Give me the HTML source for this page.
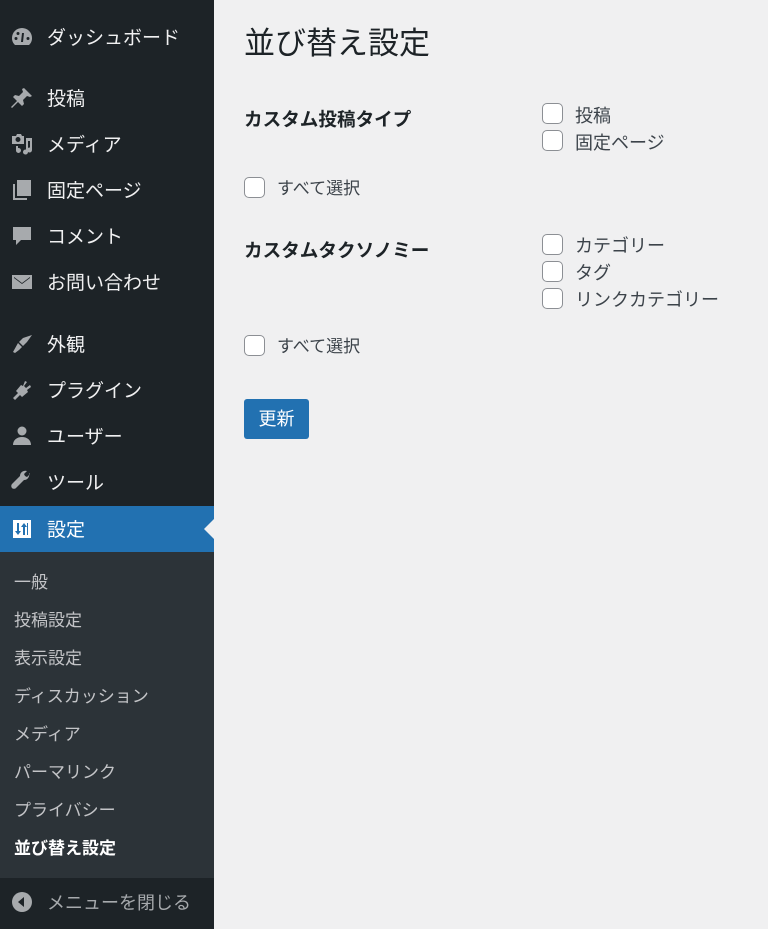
<!DOCTYPE html>
<html><head><meta charset="utf-8"><style>
*{margin:0;padding:0;box-sizing:border-box}
body{width:768px;height:929px;background:#f0f0f1;font-family:"Liberation Sans","Noto Sans CJK JP",sans-serif;position:relative;overflow:hidden}
#sb{position:absolute;left:0;top:0;width:214px;height:929px;background:#1d2327}
.mi{position:absolute;left:0;width:214px;height:46px;color:#f0f0f1;font-size:19px;line-height:46px}
.mi span.t{position:absolute;left:47px;top:2px}
.mi svg{position:absolute;left:10px;top:11px;width:24px;height:24px;fill:#a7aaad}
.act{background:#2271b1;color:#fff}
.act svg{fill:#fff}
#sub{position:absolute;left:0;top:552px;width:214px;height:326px;background:#2c3338}
.si{position:absolute;left:14px;font-size:17px;color:#c3c4c7;line-height:24px;margin-top:2px}
#col{position:absolute;left:0;top:878px;width:214px;height:51px;background:#1d2327;color:#a7aaad;font-size:18px}
.arrow{position:absolute;left:204px;top:519px;width:0;height:0;border-top:10px solid transparent;border-bottom:10px solid transparent;border-right:10px solid #f0f0f1}
.cb{position:absolute;width:21px;height:21px;border:1.5px solid #8c8f94;border-radius:5px;background:#fff}
.lb{position:absolute;font-size:18px;color:#3c434a;line-height:24px;margin-top:2px}
h1{position:absolute;left:244px;top:25px;font-size:31px;font-weight:normal;color:#1d2327;line-height:38px}
.h{position:absolute;left:244px;font-size:18.6px;font-weight:bold;color:#1d2327;line-height:24px;margin-top:2px}
.btn{position:absolute;left:244px;top:399px;width:65px;height:40px;background:#2271b1;border-radius:3px;color:#fff;font-size:18px;line-height:40px;text-align:center}
</style></head><body>
<div id="sb">
<div class="mi" style="top:14px"><svg viewBox="0 0 24 24"><path d="M12 3a10 10 0 0 0-10 10c0 3 1 5 3 7h14c2-2 3-4 3-7A10 10 0 0 0 12 3zm-6 12a1.5 1.5 0 1 1 0-3 1.5 1.5 0 0 1 0 3zm2-5a1.5 1.5 0 1 1 0-3 1.5 1.5 0 0 1 0 3zm5 7h-2l1-9 2 0zm5-2a1.5 1.5 0 1 1 0-3 1.5 1.5 0 0 1 0 3z"/></svg><span class="t">ダッシュボード</span></div>
<div class="mi" style="top:75px"><svg viewBox="0 0 24 24"><path d="M14 2l8 8-2 1-3-1-4 4 1 4-2 2-4-4-6 6-1-1 6-6-4-4 2-2 4 1 4-4-1-3z"/></svg><span class="t">投稿</span></div>
<div class="mi" style="top:121px"><svg viewBox="0 0 24 24"><path d="M2 4h4l1-2h4l1 2h2v8H2zM8 10a2.5 2.5 0 1 0 0-5 2.5 2.5 0 0 0 0 5zM16 6h6v12a2.5 2.5 0 1 1-2-2.4V9h-2v11a2.5 2.5 0 1 1-2-2.4zM4 14h4v2a2.5 2.5 0 1 1-2 2.4V14z"/></svg><span class="t">メディア</span></div>
<div class="mi" style="top:167px"><svg viewBox="0 0 24 24"><path d="M7 2h14v16H7zM3 6h2v14h12v2H3z"/></svg><span class="t">固定ページ</span></div>
<div class="mi" style="top:213px"><svg viewBox="0 0 24 24"><path d="M3 3h18v13H11l-5 5v-5H3z"/></svg><span class="t">コメント</span></div>
<div class="mi" style="top:259px"><svg viewBox="0 0 24 24"><path d="M2 5h20v14H2zM4 7v1l8 6 8-6V7l-8 6z"/></svg><span class="t">お問い合わせ</span></div>
<div class="mi" style="top:321px"><svg viewBox="0 0 24 24"><path d="M22 3l-9 3-4 4 4 4 4-4zM8 11l-5 9 2 1 4-3 3-3z"/></svg><span class="t">外観</span></div>
<div class="mi" style="top:367px"><svg viewBox="0 0 24 24"><path d="M15 3l2 1-3 4 2 2 4-3 1 2-4 3 1 2-6 5-2-2-5 5-2-2 5-5-2-2 5-6 2 1z"/></svg><span class="t">プラグイン</span></div>
<div class="mi" style="top:413px"><svg viewBox="0 0 24 24"><circle cx="12" cy="7" r="4.5"/><path d="M3 21c0-5 4-8 9-8s9 3 9 8z"/></svg><span class="t">ユーザー</span></div>
<div class="mi" style="top:459px"><svg viewBox="0 0 24 24"><path d="M20 4l-3 3-2-1-1-2 3-3c-3-1-7 1-7 5l-8 8c-1 1-1 3 0 4s3 1 4 0l8-8c4 0 6-4 5-7z"/></svg><span class="t">ツール</span></div>
<div class="mi act" style="top:506px"><svg viewBox="0 0 24 24"><path d="M3 3h18v18H3zM7 6v8H5l3 4 3-4H9V6zm8 12v-8h2l-3-4-3 4h2v8zm3-12h-1v12h1z" fill-rule="evenodd"/></svg><span class="t">設定</span></div>
<div class="arrow"></div>
<div id="sub">
<div class="si" style="top:17px">一般</div>
<div class="si" style="top:55px">投稿設定</div>
<div class="si" style="top:93px">表示設定</div>
<div class="si" style="top:131px">ディスカッション</div>
<div class="si" style="top:169px">メディア</div>
<div class="si" style="top:207px">パーマリンク</div>
<div class="si" style="top:245px">プライバシー</div>
<div class="si" style="top:283px;color:#fff;font-weight:bold">並び替え設定</div>
</div>
<div id="col"><svg viewBox="0 0 24 24" style="position:absolute;left:10px;top:12px;width:24px;height:24px"><circle cx="12" cy="12" r="10" fill="#a7aaad"/><path d="M14 7v10l-6-5z" fill="#1d2327"/></svg><span style="position:absolute;left:47px;top:13px;line-height:24px">メニューを閉じる</span></div>
</div>
<h1>並び替え設定</h1>
<div class="h" style="top:106px">カスタム投稿タイプ</div>
<div class="cb" style="left:542px;top:103px"></div><div class="lb" style="left:575px;top:102px">投稿</div>
<div class="cb" style="left:542px;top:130px"></div><div class="lb" style="left:575px;top:129px">固定ページ</div>
<div class="cb" style="left:244px;top:177px"></div><div class="lb" style="left:277px;top:175px;font-size:17px">すべて選択</div>
<div class="h" style="top:237px">カスタムタクソノミー</div>
<div class="cb" style="left:542px;top:234px"></div><div class="lb" style="left:575px;top:232px">カテゴリー</div>
<div class="cb" style="left:542px;top:261px"></div><div class="lb" style="left:575px;top:259px">タグ</div>
<div class="cb" style="left:542px;top:288px"></div><div class="lb" style="left:575px;top:286px">リンクカテゴリー</div>
<div class="cb" style="left:244px;top:335px"></div><div class="lb" style="left:277px;top:333px;font-size:17px">すべて選択</div>
<div class="btn">更新</div>
</body></html>
